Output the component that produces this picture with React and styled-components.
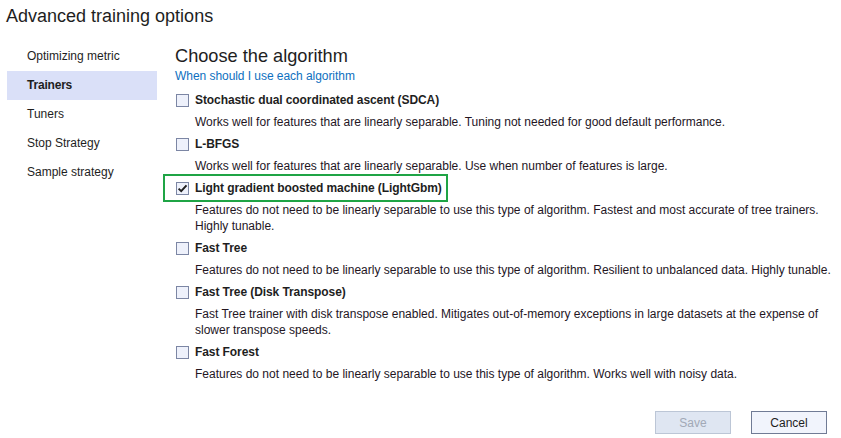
import styled, { createGlobalStyle } from "styled-components"

const Global = createGlobalStyle`
body{
    margin: 0;
    background: #ffffff;
    font-family: "Segoe UI", "Liberation Sans", sans-serif;
    color: #1e1e1e;
}
`

const algorithms = [
    {
        name: "Stochastic dual coordinated ascent (SDCA)",
        text: "Works well for features that are linearly separable. Tuning not needed for good default performance.",
    },
    {
        name: "L-BFGS",
        text: "Works well for features that are linearly separable. Use when number of features is large.",
    },
    {
        name: "Light gradient boosted machine (LightGbm)",
        text: "Features do not need to be linearly separable to use this type of algorithm. Fastest and most accurate of tree trainers. Highly tunable.",
        checked: true,
    },
    {
        name: "Fast Tree",
        text: "Features do not need to be linearly separable to use this type of algorithm. Resilient to unbalanced data. Highly tunable.",
    },
    {
        name: "Fast Tree (Disk Transpose)",
        text: "Fast Tree trainer with disk transpose enabled. Mitigates out-of-memory exceptions in large datasets at the expense of slower transpose speeds.",
    },
    {
        name: "Fast Forest",
        text: "Features do not need to be linearly separable to use this type of algorithm. Works well with noisy data.",
    },
]

const menu = ["Optimizing metric", "Trainers", "Tuners", "Stop Strategy", "Sample strategy"]

const App = () => {
    return (
        <Page>
            <Global />
            <Title>Advanced training options</Title>
            <Body>
                <Sidebar>
                    {menu.map((m) => (
                        <NavItem key={m} active={m === "Trainers"}>{m}</NavItem>
                    ))}
                </Sidebar>
                <Main>
                    <Heading>Choose the algorithm</Heading>
                    <HelpLink href="#">When should I use each algorithm</HelpLink>
                    <Options>
                        {algorithms.map((a) => (
                            <Option key={a.name}>
                                <Label focused={a.checked}>
                                    <Box>
                                        {a.checked && (
                                            <svg width="11" height="11" viewBox="0 0 11 11">
                                                <path d="M1.6 5.6 L4.2 8.2 L9.5 2.3" fill="none" stroke="#1e1e1e" strokeWidth="1.9" />
                                            </svg>
                                        )}
                                    </Box>
                                    <Name>{a.name}</Name>
                                </Label>
                                <Desc>{a.text}</Desc>
                            </Option>
                        ))}
                    </Options>
                </Main>
            </Body>
            <Footer>
                <Button disabled>Save</Button>
                <Button>Cancel</Button>
            </Footer>
        </Page>
    )
}

export default App

const Page = styled.div`
width: 841px;
height: 438px;
display: flex;
flex-direction: column;
overflow: hidden;
`
const Title = styled.div`
font-size: 18px;
line-height: 24px;
padding: 4px 0 0 6px;
height: 31px;
box-sizing: border-box;
color: #1e1e1e;
`
const Body = styled.div`
display: flex;
flex: 1;
padding-top: 11px;
`
const Sidebar = styled.div`
width: 150px;
margin-left: 7px;
display: flex;
flex-direction: column;
`
const NavItem = styled.div`
height: 29px;
line-height: 29px;
padding-left: 20px;
font-size: 12px;
font-weight: ${(p) => (p.active ? 700 : 400)};
letter-spacing: ${(p) => (p.active ? "-0.2px" : "0")};
background: ${(p) => (p.active ? "#dae0f8" : "transparent")};
`
const Main = styled.div`
margin-left: 18px;
display: flex;
flex-direction: column;
`
const Heading = styled.div`
font-size: 18.2px;
line-height: 24px;
margin-top: 2px;
`
const HelpLink = styled.a`
font-size: 12px;
color: #0e70c0;
text-decoration: none;
line-height: 16px;
letter-spacing: -0.05px;
`
const Options = styled.div`
display: flex;
flex-direction: column;
margin-top: 5px;
`
const Option = styled.div`
display: flex;
flex-direction: column;
`
const Label = styled.div`
box-sizing: border-box;
display: flex;
align-items: center;
gap: 6px;
height: ${(p) => (p.focused ? "28px" : "22px")};
margin: ${(p) => (p.focused ? "-3px 0 -3px -12px" : "0")};
padding: ${(p) => (p.focused ? "0 4px 0 11px" : "0 0 0 1px")};
border: ${(p) => (p.focused ? "2px solid #1fa445" : "none")};
align-self: flex-start;
`
const Name = styled.span`
font-size: 12px;
font-weight: 700;
letter-spacing: -0.08px;
`
const Box = styled.div`
width: 11px;
height: 11px;
border: 1px solid #7c86a4;
background: #eef1fb;
display: flex;
align-items: center;
justify-content: center;
`
const Desc = styled.div`
font-size: 12px;
line-height: 16px;
padding: 3px 0 3px 20px;
max-width: 640px;
color: #24161f;
`
const Footer = styled.div`
display: flex;
justify-content: flex-end;
gap: 20px;
padding: 0 14px 4px 0;
`
const Button = styled.button`
width: 76px;
height: 23px;
font-family: inherit;
font-size: 12px;
background: ${(p) => (p.disabled ? "#dfe6f2" : "#f1f4fc")};
border: 1px solid ${(p) => (p.disabled ? "#bcc6d6" : "#707b95")};
color: ${(p) => (p.disabled ? "#a2a9b6" : "#1e1e1e")};
padding: 0;
`
